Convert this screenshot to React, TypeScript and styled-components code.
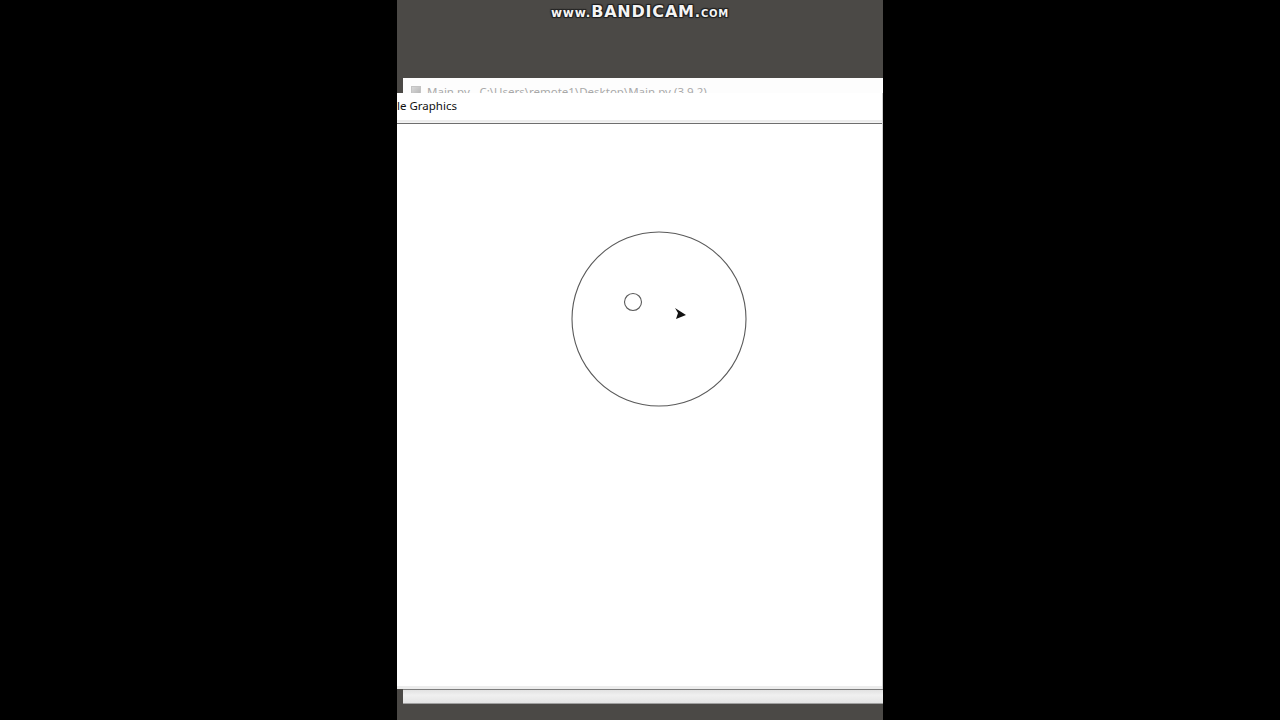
import React from "react";
import styled, { createGlobalStyle } from "styled-components";

const Global = createGlobalStyle`
  html, body { margin: 0; padding: 0; background: #000; }
  body { width: 1280px; height: 720px; overflow: hidden; font-family: "Noto Sans", "Open Sans", sans-serif; }
  #root { width: 1280px; height: 720px; }
`;

const Screen = styled.div`
  width: 1280px;
  height: 720px;
  display: flex;
  justify-content: center;
  background: #000;
`;

const Stage = styled.div`
  position: relative;
  width: 486px;
  height: 720px;
  background: #4b4946;
  overflow: hidden;
`;

const Watermark = styled.div`
  position: absolute;
  top: 2px;
  left: 0;
  right: 0;
  display: flex;
  justify-content: center;
  align-items: baseline;
  font-family: "DejaVu Sans", sans-serif;
  font-weight: bold;
  color: #f4f4f4;
  text-shadow: 0 0 1px #111, 1px 1px 1px #222, -1px -1px 1px #222, 1px -1px 1px #222, -1px 1px 1px #222;
  letter-spacing: 0.8px;
`;

const Mark = styled.span<{ $size: number; $caps?: boolean }>`
  font-size: ${(p) => p.$size}px;
  font-variant: ${(p) => (p.$caps ? "small-caps" : "normal")};
`;

const BackWindow = styled.div`
  position: absolute;
  top: 78px;
  left: 6px;
  right: 0;
  bottom: 16px;
  background: #fdfdfd;
  display: flex;
  flex-direction: column;
  justify-content: space-between;
`;

const BackTitle = styled.div`
  height: 26px;
  display: flex;
  align-items: center;
  gap: 6px;
  padding: 1px 0 0 8px;
  color: #a9a9a9;
  font-family: "Noto Sans", sans-serif;
  font-size: 11.5px;
  white-space: nowrap;
  box-sizing: border-box;
`;

const FileIcon = styled.div`
  width: 10px;
  height: 12px;
  background: linear-gradient(135deg, #d8d8d8, #b0b0b0);
  border: 1px solid #c4c4c4;
  box-sizing: border-box;
`;

const BackBottom = styled.div`
  height: 15px;
  border-top: 1px solid #7d7d7d;
  border-bottom: 1px solid #a0a0a0;
  background: linear-gradient(#e2e2e2, #f0f0f0 40%, #e4e4e4);
  box-sizing: border-box;
`;

const FrontWindow = styled.div`
  position: absolute;
  top: 93px;
  left: 0;
  right: 0;
  bottom: 31px;
  display: flex;
  flex-direction: column;
  background: #fff;
  border-right: 1px solid #d0d0d0;
`;

const TitleBar = styled.div`
  flex: 0 0 29px;
  display: flex;
  align-items: center;
  padding-bottom: 2px;
  font-family: "Noto Sans", sans-serif;
  font-size: 11.5px;
  color: #111;
  background: #fff;
  border-bottom: 2px solid #ececec;
  box-sizing: border-box;
  white-space: nowrap;
`;

const Separator = styled.div`
  flex: 0 0 1px;
  background: #6e6e6e;
  border-top: 1px solid #f4f4f4;
`;

const Canvas = styled.div`
  flex: 1 1 0;
  min-height: 0;
  overflow: hidden;
  background: #fff;
`;

const CanvasFooter = styled.div`
  flex: 0 0 3px;
  background: #ececec;
`;

export default function App() {
  return (
    <>
      <Global />
      <Screen>
        <Stage>
          <Watermark>
            <Mark $size={12}>www.</Mark>
            <Mark $size={16}>BANDICAM</Mark>
            <Mark $size={14} $caps>.com</Mark>
          </Watermark>
          <BackWindow>
            <BackTitle>
              <FileIcon />
              <span>Main.py - C:\Users\remote1\Desktop\Main.py (3.9.2)</span>
            </BackTitle>
            <BackBottom />
          </BackWindow>
          <FrontWindow>
            <TitleBar>le Graphics</TitleBar>
            <Separator />
            <Canvas>
              <svg width="486" height="562" viewBox="0 0 486 562">
                <circle cx="262" cy="195" r="87" fill="none" stroke="#5a5a5a" strokeWidth="1.1" />
                <circle cx="236" cy="178" r="8.5" fill="none" stroke="#5a5a5a" strokeWidth="1.1" />
                <polygon points="289,191 278,184 281,189 279,195" fill="#111" />
              </svg>
            </Canvas>
            <CanvasFooter />
          </FrontWindow>
        </Stage>
      </Screen>
    </>
  );
}
